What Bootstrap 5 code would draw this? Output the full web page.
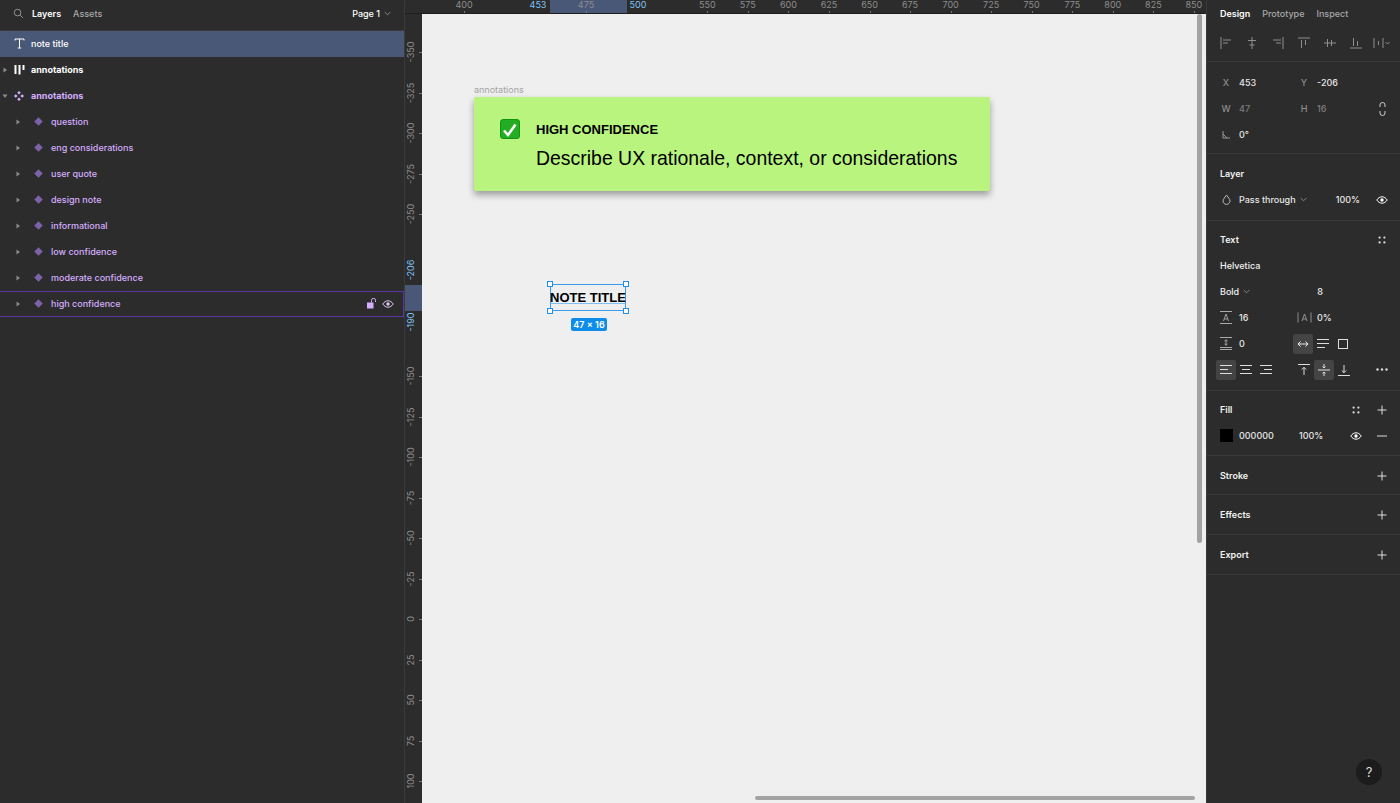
<!DOCTYPE html>
<html lang="en">
<head>
<meta charset="UTF-8">
<title>Figma - annotations</title>
<meta name="viewport" content="width=device-width, initial-scale=1">
<link href="https://cdn.jsdelivr.net/npm/bootstrap@5.3.3/dist/css/bootstrap.min.css" rel="stylesheet">
<style>
html, body { height: 100%; overflow: hidden; }
body { background: #2c2c2c; color: #e6e6e6; font-family: Inter, "Noto Sans", sans-serif; font-size: 9px; font-weight: 500; line-height: 1; }
svg { display: block; }

/* left layers panel */
.layers { width: 405px; flex: none; border-right: 1px solid #3a3a3a; }
.layers-top { height: 31px; border-bottom: 1px solid #3a3a3a; padding: 0 13px 3px 13px; }
.tab-on { color: #fff; font-weight: 600; }
.tab-off { color: #a8a8a8; }
.tab-gap { margin-left: 12px; }
.lay-row { height: 26px; position: relative; color: #d5aeff; padding-bottom: 1px; }
.lay-row.is-sel { background: #4a5878; color: #fff; }
.lay-row.is-top { color: #fff; font-weight: 700; }
.lay-row.is-comp { font-weight: 700; }
.lay-row.is-hover { border: 1px solid #5a34a0; border-left: 0; }
.caret { width: 10px; display: flex; justify-content: center; flex: none; }
.lay-ico { width: 18px; display: flex; justify-content: center; flex: none; }
.lay-name { margin-left: 3px; }
.lay-d1 { padding-left: 13px; }
.lay-d1 .lay-ico { margin-left: 6px; }
.lay-d1 .lay-name { margin-left: 4px; }
.lay-acts { margin-left: auto; margin-right: 9px; gap: 5px; color: #dcc8f7; }

/* rulers and canvas */
.mid { flex: 1 1 auto; min-width: 0; }
.ruler-v { width: 17px; flex: none; position: relative; background: #2c2c2c; overflow: hidden; }
.ruler-h { height: 14px; flex: none; position: relative; background: #2c2c2c; overflow: hidden; border-bottom: 1px solid #1e1e1e; }
.corner { height: 14px; border-bottom: 1px solid #1e1e1e; }
.rl { position: absolute; color: #8c8c8c; font-size: 9px; font-weight: 400; white-space: nowrap; }
.ruler-h .rl { top: 0; line-height: 9px; transform: translateX(-50%); }
.ruler-v .rl { left: 5px; transform: translate(-50%, -50%) rotate(-90deg); }
.rl.is-blue { color: #7cc4f8; }
.tick-h { position: absolute; bottom: 0; width: 1px; height: 2px; background: #777; }
.tick-v { position: absolute; right: 0; height: 1px; width: 3px; background: #777; }
.sel-h { position: absolute; left: 128px; width: 77px; top: 0; bottom: 0; background: #4a5878; }
.sel-v { position: absolute; top: 285px; height: 26px; left: 0; right: 0; background: #4a5878; }
.canvas { position: relative; background: #efefef; flex: 1 1 auto; overflow: hidden; }
.frame-name { position: absolute; left: 52px; top: 71px; font-size: 9px; font-weight: 400; color: #a3a3a3; }
.note { position: absolute; left: 52px; top: 83px; width: 516px; height: 94px; background: #b9f47f; border-radius: 2px; box-shadow: 0 4px 7px rgba(0,0,0,.35); padding: 22px 0 0 26px; color: #000; font-family: "Liberation Sans", Arial, sans-serif; font-weight: 400; }
.note-title { font-size: 13px; font-weight: 700; line-height: 20px; margin-top: 1px; }
.note-text { font-size: 19.44px; line-height: 24px; margin-top: 6px; }
.check-ico { margin-right: 16px; flex: none; }
.sel-box { position: absolute; left: 128px; top: 270px; width: 76px; height: 27px; border: 1px solid #3d9ae8; color: #000; font: 700 13px/25px "Liberation Sans", Arial, sans-serif; text-indent: -1px; white-space: nowrap; }
.sel-line { position: absolute; left: 0; right: 0; top: 18px; height: 1px; background: #7ebff3; }
.hdl { position: absolute; width: 6px; height: 6px; background: #fff; border: 1px solid #1f8fe8; }
.hdl-tl { left: -4px; top: -4px; }
.hdl-tr { right: -4px; top: -4px; }
.hdl-bl { left: -4px; bottom: -4px; }
.hdl-br { right: -4px; bottom: -4px; }
.size-tag { position: absolute; left: 149px; top: 304px; width: 36px; height: 13px; line-height: 13px; text-align: center; background: #0d8ce9; color: #fff; border-radius: 2px; font-size: 9px; font-weight: 600; }
.bar-v { position: absolute; left: 775px; top: 0; width: 5px; height: 529px; border-radius: 3px; background: #a3a3a3; }
.bar-h { position: absolute; left: 333px; top: 782px; width: 440px; height: 4px; border-radius: 2px; background: #a3a3a3; }

/* right design panel */
.design { width: 194px; flex: none; border-left: 1px solid #3a3a3a; position: relative; }
.design-sec { border-bottom: 1px solid #3a3a3a; }
.tabs-row { height: 29px; padding-left: 13px; padding-bottom: 2px; }
.pr { height: 26px; padding-left: 6px; padding-right: 5px; padding-bottom: 1px; display: flex; align-items: center; color: #e6e6e6; }
.pr-title { padding-left: 13px; font-weight: 600; color: #f2f2f2; }
.pr-icons { height: 32px; padding-bottom: 5px; }
.pr-aligns { padding-left: 9px; }
.lab { width: 26px; flex: none; display: flex; justify-content: center; color: #8e8e8e; }
.lab-lit { color: #ddd; }
.val { width: 52px; flex: none; }
.val-wide { width: 60px; }
.dim { color: #7d7d7d; }
.end { margin-left: auto; }
.pct-gap { margin-right: 9px; }
.cl { width: 20px; height: 20px; flex: none; display: flex; align-items: center; justify-content: center; border-radius: 2px; }
.cl.is-on { background: #444; }
.cl-first { margin-left: 2px; }
.cl-gap { margin-left: 18px; }
.swatch { width: 13px; height: 13px; background: #000; display: block; }
.bold-chev { margin-left: 4px; }
.font-size-val { margin-left: 67px; }
.pr-plain { font-weight: 500; }
.sec-xy { padding: 8px 0 5px; }
.sec-layer { padding: 7px 0; }
.sec-text { padding: 6px 0 7px; }
.sec-fill { padding: 6px 0; }
.sec-stroke { padding: 7px 0 5px; }
.sec-other { padding: 7px 0 6px; }
.help-btn { position: absolute; right: 18px; bottom: 18px; width: 26px; height: 26px; border-radius: 50%; background: #1c1c1c; color: #ddd; font-size: 13px; font-weight: 400; line-height: 26px; text-align: center; }
</style>
</head>
<body>
<svg width="0" height="0" class="position-absolute">
  <symbol id="i-eye" viewBox="0 0 12 12"><path d="M.8 6C2.2 3.8 4 2.8 6 2.8S9.8 3.8 11.2 6C9.8 8.2 8 9.2 6 9.2S2.2 8.2.8 6z" fill="none" stroke="currentColor"/><circle cx="6" cy="6" r="1.7" fill="currentColor"/></symbol>
  <symbol id="i-dots" viewBox="0 0 10 10"><g fill="currentColor"><circle cx="2" cy="2" r="1.400"/><circle cx="8" cy="2" r="1.400"/><circle cx="2" cy="8" r="1.400"/><circle cx="8" cy="8" r="1.400"/></g></symbol>
  <symbol id="i-plus" viewBox="0 0 10 10"><path d="M5 .5v9M.5 5h9" stroke="currentColor" fill="none"/></symbol>
  <symbol id="i-diamond" viewBox="0 0 10 10"><path d="M5 .3 9.700 5 5 9.700.3 5z" fill="#7d62a8"/></symbol>
  <symbol id="i-right" viewBox="0 0 6 6"><path d="M1.500.5 5 3 1.500 5.500z" fill="#8b8b8b"/></symbol>
</svg>

<div class="d-flex vh-100">

  <!-- layers -->
  <div class="layers">
    <div class="layers-top d-flex align-items-center">
      <svg width="11" height="11" viewBox="0 0 12 12" fill="none" stroke="#9a9a9a"><circle cx="5" cy="5" r="3.600"/><path d="M7.700 7.700 11 11"/></svg>
      <span class="tab-on ms-2">Layers</span>
      <span class="tab-off tab-gap">Assets</span>
      <span class="ms-auto text-white me-1">Page 1</span>
      <svg width="7" height="5" viewBox="0 0 7 5" fill="none" stroke="#888"><path d="M.7 1 3.500 3.800 6.300 1"/></svg>
    </div>
    <div class="lay-row is-sel d-flex align-items-center">
      <span class="caret"></span>
      <span class="lay-ico"><svg width="11" height="11" viewBox="0 0 11 11" fill="none" stroke="#fff"><path d="M1 2.500V1h9v1.500M5.500 1v9M3.800 10h3.400"/></svg></span>
      <span class="lay-name">note title</span>
    </div>
    <div class="lay-row is-top d-flex align-items-center">
      <span class="caret"><svg width="6" height="6"><use href="#i-right"/></svg></span>
      <span class="lay-ico"><svg width="11" height="10" viewBox="0 0 11 10" fill="#fff"><rect x=".5" width="2" height="9"/><rect x="4.500" width="2" height="9.500"/><rect x="8.500" width="2" height="5"/></svg></span>
      <span class="lay-name">annotations</span>
    </div>
    <div class="lay-row is-comp d-flex align-items-center">
      <span class="caret"><svg width="6" height="6" viewBox="0 0 6 6"><path d="M.5 1.500h5L3 5z" fill="#8b8b8b"/></svg></span>
      <span class="lay-ico"><svg width="10" height="10" viewBox="0 0 10 10" fill="#d5aeff"><path d="M5 0 6.800 1.800 5 3.600 3.200 1.800zM5 6.400 6.800 8.200 5 10 3.200 8.200zM1.800 3.200 3.600 5 1.800 6.800 0 5zM8.200 3.200 10 5 8.200 6.800 6.400 5z"/></svg></span>
      <span class="lay-name">annotations</span>
    </div>
    <div class="lay-row d-flex align-items-center lay-d1"><span class="caret"><svg width="6" height="6"><use href="#i-right"/></svg></span><span class="lay-ico"><svg width="9" height="9"><use href="#i-diamond"/></svg></span><span class="lay-name">question</span></div>
    <div class="lay-row d-flex align-items-center lay-d1"><span class="caret"><svg width="6" height="6"><use href="#i-right"/></svg></span><span class="lay-ico"><svg width="9" height="9"><use href="#i-diamond"/></svg></span><span class="lay-name">eng considerations</span></div>
    <div class="lay-row d-flex align-items-center lay-d1"><span class="caret"><svg width="6" height="6"><use href="#i-right"/></svg></span><span class="lay-ico"><svg width="9" height="9"><use href="#i-diamond"/></svg></span><span class="lay-name">user quote</span></div>
    <div class="lay-row d-flex align-items-center lay-d1"><span class="caret"><svg width="6" height="6"><use href="#i-right"/></svg></span><span class="lay-ico"><svg width="9" height="9"><use href="#i-diamond"/></svg></span><span class="lay-name">design note</span></div>
    <div class="lay-row d-flex align-items-center lay-d1"><span class="caret"><svg width="6" height="6"><use href="#i-right"/></svg></span><span class="lay-ico"><svg width="9" height="9"><use href="#i-diamond"/></svg></span><span class="lay-name">informational</span></div>
    <div class="lay-row d-flex align-items-center lay-d1"><span class="caret"><svg width="6" height="6"><use href="#i-right"/></svg></span><span class="lay-ico"><svg width="9" height="9"><use href="#i-diamond"/></svg></span><span class="lay-name">low confidence</span></div>
    <div class="lay-row d-flex align-items-center lay-d1"><span class="caret"><svg width="6" height="6"><use href="#i-right"/></svg></span><span class="lay-ico"><svg width="9" height="9"><use href="#i-diamond"/></svg></span><span class="lay-name">moderate confidence</span></div>
    <div class="lay-row is-hover d-flex align-items-center lay-d1">
      <span class="caret"><svg width="6" height="6"><use href="#i-right"/></svg></span><span class="lay-ico"><svg width="9" height="9"><use href="#i-diamond"/></svg></span><span class="lay-name">high confidence</span>
      <span class="lay-acts d-flex align-items-center">
        <svg width="10" height="11" viewBox="0 0 10 11"><rect y="4.500" width="6.500" height="6" fill="#d5aeff"/><path d="M4.500 4.500V2.300a2 2 0 0 1 4 0V4" fill="none" stroke="#d5aeff"/></svg>
        <svg width="12" height="12"><use href="#i-eye"/></svg>
      </span>
    </div>
  </div>

  <!-- rulers and canvas -->
  <div class="ruler-v" id="rulerV"><div class="corner"></div><div class="sel-v"></div></div>
  <div class="mid d-flex flex-column">
    <div class="ruler-h" id="rulerH"><div class="sel-h"></div></div>
    <div class="canvas">
      <div class="frame-name">annotations</div>
      <div class="note d-flex">
        <svg class="check-ico" width="20" height="20" viewBox="0 0 20 20"><rect width="20" height="20" rx="3.500" fill="#129412"/><rect x="1" y="1" width="18" height="18" rx="2.500" fill="#22ad22"/><path d="M4 11.500 8 16 15.500 5.500" fill="none" stroke="#fff" stroke-width="2.600"/></svg>
        <div><div class="note-title">HIGH CONFIDENCE</div><div class="note-text">Describe UX rationale, context, or considerations</div></div>
      </div>
      <div class="sel-box">NOTE TITLE<span class="sel-line"></span>
        <span class="hdl hdl-tl"></span><span class="hdl hdl-tr"></span><span class="hdl hdl-bl"></span><span class="hdl hdl-br"></span>
      </div>
      <div class="size-tag">47 × 16</div>
      <div class="bar-v"></div>
      <div class="bar-h"></div>
    </div>
  </div>

  <!-- design -->
  <div class="design">
    <div class="design-sec">
      <div class="tabs-row d-flex align-items-center">
        <span class="tab-on">Design</span><span class="tab-off tab-gap">Prototype</span><span class="tab-off tab-gap">Inspect</span>
      </div>
      <div class="pr pr-icons">
        <span class="lab"><svg width="12" height="12" viewBox="0 0 12 12" fill="none" stroke="#8e8e8e"><path d="M1 0v12M3 3h8M3 6h5"/></svg></span>
        <span class="lab"><svg width="12" height="12" viewBox="0 0 12 12" fill="none" stroke="#8e8e8e"><path d="M6 0v12M2 3.500h8M3.500 8h5"/></svg></span>
        <span class="lab"><svg width="12" height="12" viewBox="0 0 12 12" fill="none" stroke="#8e8e8e"><path d="M11 0v12M1 3h8M4 6h5"/></svg></span>
        <span class="lab"><svg width="12" height="12" viewBox="0 0 12 12" fill="none" stroke="#8e8e8e"><path d="M0 1h12M3.500 3v8M7.500 3v5"/></svg></span>
        <span class="lab"><svg width="12" height="12" viewBox="0 0 12 12" fill="none" stroke="#8e8e8e"><path d="M0 6h12M3.500 2v8M7.500 3v6"/></svg></span>
        <span class="lab"><svg width="12" height="12" viewBox="0 0 12 12" fill="none" stroke="#8e8e8e"><path d="M0 11h12M3.500 1v8M7.500 4v5"/></svg></span>
        <span class="lab"><svg width="18" height="12" viewBox="0 0 18 12" fill="none" stroke="#8e8e8e"><path d="M1 1v10M10 1v10M5.500 4v4M12.500 5l2 2 2-2"/></svg></span>
      </div>
    </div>
    <div class="design-sec sec-xy">
      <div class="pr"><span class="lab">X</span><span class="val">453</span><span class="lab">Y</span><span class="val">-206</span></div>
      <div class="pr dim"><span class="lab">W</span><span class="val">47</span><span class="lab">H</span><span class="val">16</span>
        <span class="lab end"><svg width="7" height="14" viewBox="0 0 7 14" fill="none" stroke="#ccc"><path d="M1 5V3a2.500 2.500 0 0 1 5 0v2M1 9v2a2.500 2.500 0 0 0 5 0V9"/></svg></span></div>
      <div class="pr"><span class="lab"><svg width="9" height="9" viewBox="0 0 9 9" fill="none" stroke="#999"><path d="M1 1v7h7M1 4l4 4"/></svg></span><span class="val">0°</span></div>
    </div>
    <div class="design-sec sec-layer">
      <div class="pr pr-title">Layer</div>
      <div class="pr"><span class="lab"><svg width="9" height="11" viewBox="0 0 9 11" fill="none" stroke="#bbb"><path d="M4.500 1 7.700 5.500a3.500 3.500 0 1 1-6.400 0z"/></svg></span>
        <span>Pass through</span><svg class="ms-1" width="7" height="5" viewBox="0 0 7 5" fill="none" stroke="#888"><path d="M.7 1 3.500 3.800 6.300 1"/></svg>
        <span class="ms-auto pct-gap">100%</span>
        <span class="lab text-white"><svg width="12" height="12"><use href="#i-eye"/></svg></span></div>
    </div>
    <div class="design-sec sec-text">
      <div class="pr pr-title">Text<span class="lab lab-lit end"><svg width="8" height="8"><use href="#i-dots"/></svg></span></div>
      <div class="pr pr-title pr-plain">Helvetica</div>
      <div class="pr pr-title pr-plain"><span>Bold</span><svg class="bold-chev" width="7" height="5" viewBox="0 0 7 5" fill="none" stroke="#888"><path d="M.7 1 3.500 3.800 6.300 1"/></svg><span class="font-size-val">8</span></div>
      <div class="pr">
        <span class="lab"><svg width="12" height="13" viewBox="0 0 12 13" fill="none" stroke="#aaa"><path d="M0 .5h12M0 12.500h12"/><path d="M3.500 10 6 3l2.500 7M4.400 8h3.200" stroke-width=".9"/></svg></span><span class="val">16</span>
        <span class="lab"><svg width="15" height="11" viewBox="0 0 15 11" fill="none" stroke="#999"><path d="M1 .5v10M14 .5v10M5 9l2.500-7L10 9M5.900 7h3.200" stroke-width=".9"/></svg></span><span>0%</span>
      </div>
      <div class="pr">
        <span class="lab"><svg width="12" height="13" viewBox="0 0 12 13" fill="none" stroke="#aaa"><path d="M0 .5h12M0 12.500h12M0 10.500h12M6 3v5M4.500 4 6 2.700 7.500 4M4.500 7 6 8.300 7.500 7"/></svg></span><span class="val">0</span>
        <span class="cl is-on cl-first"><svg width="12" height="8" viewBox="0 0 12 8" fill="none" stroke="#eee"><path d="M1 4h10M3.500 1.500 1 4l2.500 2.500M8.500 1.500 11 4 8.500 6.500"/></svg></span>
        <span class="cl"><svg width="12" height="9" viewBox="0 0 12 9" fill="none" stroke="#ddd"><path d="M0 .5h12M0 4.500h12M0 8.500h8"/></svg></span>
        <span class="cl"><svg width="10" height="10" viewBox="0 0 10 10" fill="none" stroke="#ddd"><rect x=".5" y=".5" width="9" height="9"/></svg></span>
      </div>
      <div class="pr pr-aligns">
        <span class="cl is-on"><svg width="12" height="9" viewBox="0 0 12 9" fill="none" stroke="#ddd"><path d="M0 .5h12M0 4.500h8M0 8.500h12"/></svg></span>
        <span class="cl"><svg width="12" height="9" viewBox="0 0 12 9" fill="none" stroke="#ddd"><path d="M0 .5h12M2 4.500h8M0 8.500h12"/></svg></span>
        <span class="cl"><svg width="12" height="9" viewBox="0 0 12 9" fill="none" stroke="#ddd"><path d="M0 .5h12M4 4.500h8M0 8.500h12"/></svg></span>
        <span class="cl cl-gap"><svg width="12" height="12" viewBox="0 0 12 12" fill="none" stroke="#ddd"><path d="M0 .5h12M6 11V3.500M3.800 5.500 6 3.300l2.200 2.200"/></svg></span>
        <span class="cl is-on"><svg width="12" height="12" viewBox="0 0 12 12" fill="none" stroke="#ddd"><path d="M0 6h12M6 0v3.800M6 12V8.200M4.500 2.600 6 4l1.500-1.400M4.500 9.400 6 8l1.500 1.400"/></svg></span>
        <span class="cl"><svg width="12" height="12" viewBox="0 0 12 12" fill="none" stroke="#ddd"><path d="M0 11.500h12M6 1v7.500M3.800 6.500 6 8.700l2.200-2.200"/></svg></span>
        <span class="lab end"><svg width="12" height="3" viewBox="0 0 12 3" fill="#ddd"><circle cx="1.500" cy="1.500" r="1.200"/><circle cx="6" cy="1.500" r="1.200"/><circle cx="10.500" cy="1.500" r="1.200"/></svg></span>
      </div>
    </div>
    <div class="design-sec sec-fill">
      <div class="pr pr-title">Fill
        <span class="lab lab-lit end"><svg width="8" height="8"><use href="#i-dots"/></svg></span>
        <span class="lab lab-lit"><svg width="10" height="10"><use href="#i-plus"/></svg></span></div>
      <div class="pr"><span class="lab"><span class="swatch"></span></span><span class="val val-wide">000000</span><span>100%</span>
        <span class="lab text-white ms-auto"><svg width="12" height="12"><use href="#i-eye"/></svg></span>
        <span class="lab lab-lit"><svg width="10" height="2" viewBox="0 0 10 2"><path d="M0 1h10" stroke="currentColor"/></svg></span></div>
    </div>
    <div class="design-sec sec-stroke"><div class="pr pr-title">Stroke<span class="lab lab-lit end"><svg width="10" height="10"><use href="#i-plus"/></svg></span></div></div>
    <div class="design-sec sec-other"><div class="pr pr-title">Effects<span class="lab lab-lit end"><svg width="10" height="10"><use href="#i-plus"/></svg></span></div></div>
    <div class="design-sec sec-other"><div class="pr pr-title">Export<span class="lab lab-lit end"><svg width="10" height="10"><use href="#i-plus"/></svg></span></div></div>
    <div class="help-btn">?</div>
  </div>
</div>

<script>
  // ruler scale, read off the picture
  const rulerH = document.getElementById('rulerH');
  const rulerV = document.getElementById('rulerV');
  function addTick(box, text, pos, cls, tick) {
    const s = document.createElement('span');
    s.className = 'rl ' + (cls || '');
    s.textContent = text;
    if (box === rulerH) s.style.left = pos + 'px'; else s.style.top = pos + 'px';
    box.appendChild(s);
    if (tick) {
      const t = document.createElement('i');
      t.className = box === rulerH ? 'tick-h' : 'tick-v';
      if (box === rulerH) t.style.left = pos + 'px'; else t.style.top = pos + 'px';
      box.appendChild(t);
    }
  }
  [400, 550, 575, 600, 625, 650, 675, 700, 725, 750, 775, 800, 825, 850].forEach(v => {
    addTick(rulerH, v, 42 + (v - 400) * 1.622, '', true);
  });
  addTick(rulerH, 453, 116, 'is-blue');
  addTick(rulerH, 475, 164, '', true);
  addTick(rulerH, 500, 216, 'is-blue');
  [-350, -325, -300, -275, -250, -150, -125, -100, -75, -50, -25, 0, 25, 50, 75, 100].forEach(v => {
    addTick(rulerV, v, 52 + (v + 350) * 1.62, '', true);
  });
  addTick(rulerV, -206, 270, 'is-blue');
  addTick(rulerV, -190, 322, 'is-blue');
</script>
<script src="https://cdn.jsdelivr.net/npm/bootstrap@5.3.3/dist/js/bootstrap.bundle.min.js"></script>
</body>
</html>
